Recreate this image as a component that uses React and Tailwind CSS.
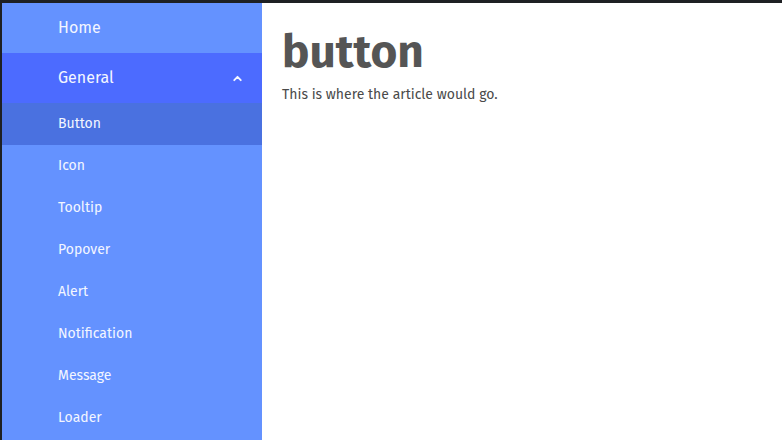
import { ChevronUp } from 'lucide-react';

const ITEMS = ['Button', 'Icon', 'Tooltip', 'Popover', 'Alert', 'Notification', 'Message', 'Loader'];

export default function App() {
  return (
    <div className="h-[440px] w-[782px] overflow-hidden bg-[#1e2023] pt-[3px] pl-[2px] font-['Fira_Sans','Noto_Sans',sans-serif]">
      <div className="flex h-full bg-white">
        <nav className="w-[260px] shrink-0 bg-[#6492ff] text-[#f3f6ff]">
          <div className="flex h-[50px] items-center pl-[56px] text-[16px]">Home</div>
          <div className="flex h-[50px] items-center justify-between bg-[#4c6bff] pl-[56px] pr-[18px] text-[16px]">
            <span>General</span>
            <ChevronUp size={13} strokeWidth={3.5} />
          </div>
          {ITEMS.map((item, i) => (
            <div
              key={item}
              className={
                'flex h-[42px] items-center pb-[2px] pl-[56px] text-[14px] ' +
                (i === 0 ? 'bg-[#4a71e0]' : '')
              }
            >
              {item}
            </div>
          ))}
        </nav>
        <main className="px-[20px] pt-[22px] text-[#555]">
          <h1 className="text-[46px] leading-[54px] font-bold">button</h1>
          <p className="mt-[5px] text-[14px] text-[#4a4a4a]">This is where the article would go.</p>
        </main>
      </div>
    </div>
  );
}
